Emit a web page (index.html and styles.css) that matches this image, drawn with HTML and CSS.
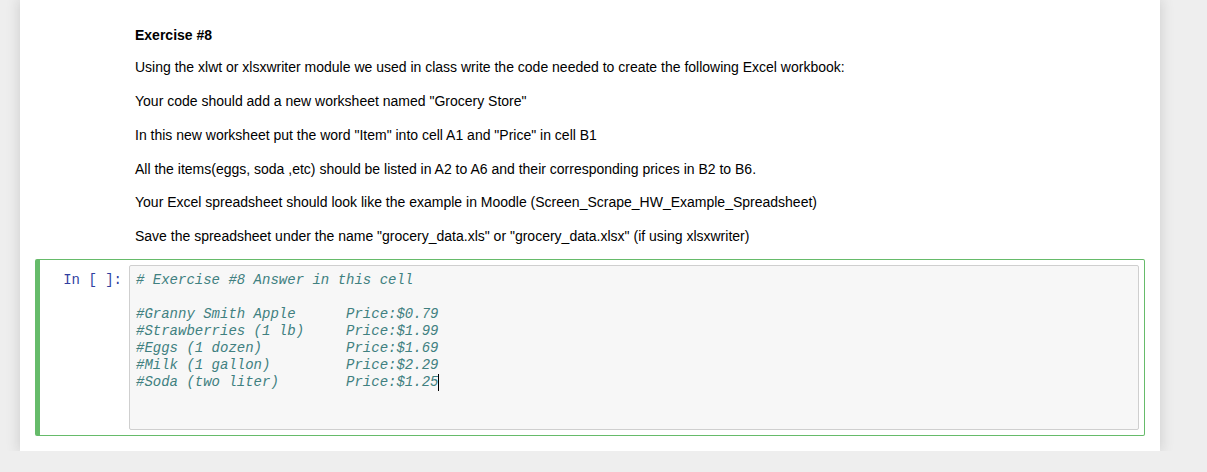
FILE: index.html
```html
<!DOCTYPE html>
<html>
<head>
<meta charset="utf-8">
<link rel="stylesheet" href="styles.css">
</head>
<body>
<div class="notebook">
  <div class="md-cell">
    <p class="md-title">Exercise #8</p>
    <p>Using the xlwt or xlsxwriter module we used in class write the code needed to create the following Excel workbook:</p>
    <p>Your code should add a new worksheet named "Grocery Store"</p>
    <p>In this new worksheet put the word "Item" into cell A1 and "Price" in cell B1</p>
    <p>All the items(eggs, soda ,etc) should be listed in A2 to A6 and their corresponding prices in B2 to B6.</p>
    <p>Your Excel spreadsheet should look like the example in Moodle (Screen_Scrape_HW_Example_Spreadsheet)</p>
    <p>Save the spreadsheet under the name "grocery_data.xls" or "grocery_data.xlsx" (if using xlsxwriter)</p>
  </div>
  <div class="code-cell">
    <div class="prompt">In&nbsp;[&nbsp;]:</div>
    <div class="input-area">
<pre class="code"># Exercise #8 Answer in this cell

#Granny Smith Apple      Price:$0.79
#Strawberries (1 lb)     Price:$1.99
#Eggs (1 dozen)          Price:$1.69
#Milk (1 gallon)         Price:$2.29
#Soda (two liter)        Price:$1.25<span class="cursor"></span></pre>
    </div>
  </div>
</div>
</body>
</html>
```

FILE: styles.css
```css
html, body {
  margin: 0;
  padding: 0;
  background: #eeeeee;
}

body {
  font-family: "Liberation Sans", Arial, sans-serif;
  font-size: 14px;
  color: #000;
}

.notebook {
  width: 1140px;
  box-sizing: border-box;
  margin-left: 20px;
  background: #fff;
  padding: 0 15px 15px 15px;
  box-shadow: 0 0 12px 1px rgba(87, 87, 87, 0.2);
}

.md-cell {
  padding: 25px 0 13px 100px;
  display: flex;
  flex-direction: column;
  gap: 13.8px;
}

.md-cell p {
  margin: 0;
  line-height: 20px;
}

.md-title {
  font-weight: bold;
  margin-bottom: -1.6px !important;
}

.code-cell {
  display: flex;
  border: 1px solid #66bb6a;
  border-left-width: 5px;
  border-radius: 2px;
  padding: 5px;
}

.prompt {
  width: 84px;
  flex: none;
  box-sizing: border-box;
  padding: 6.5px 7px 0 0;
  text-align: right;
  font-family: "Liberation Mono", "Courier New", monospace;
  font-size: 14px;
  line-height: 17px;
  color: #303f9f;
}

.input-area {
  flex: 1;
  height: 165px;
  box-sizing: border-box;
  background: #f7f7f7;
  border: 1px solid #cfcfcf;
  border-radius: 2px;
}

.code {
  margin: 0;
  padding: 5.5px 6px 4px;
  font-family: "Liberation Mono", "Courier New", monospace;
  font-style: italic;
  font-size: 14px;
  line-height: 17px;
  color: #408080;
}

.cursor {
  display: inline-block;
  width: 0;
  height: 17px;
  border-left: 1px solid #000;
  vertical-align: top;
}
```
